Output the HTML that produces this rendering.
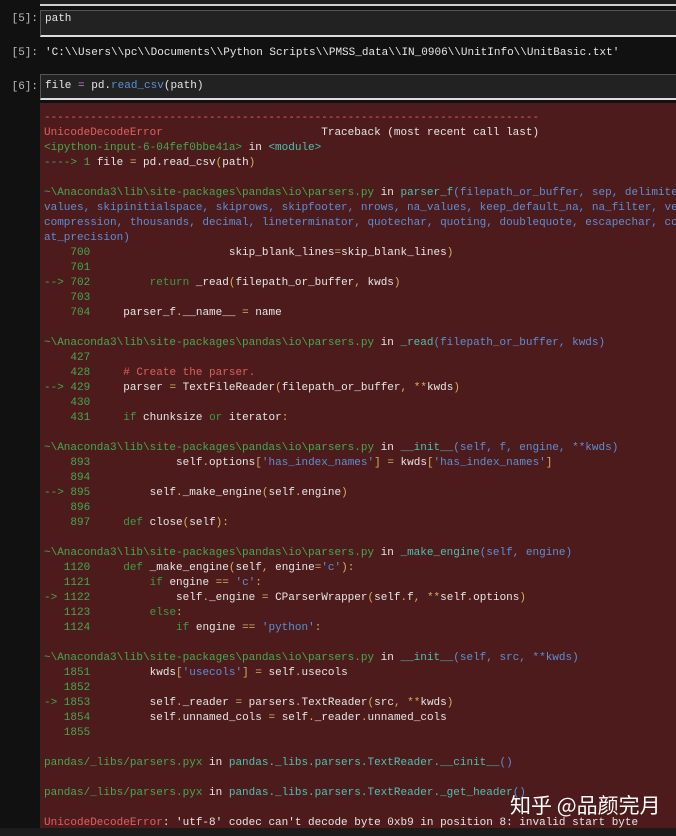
<!DOCTYPE html>
<html><head><meta charset="utf-8"><style>
body{margin:0;width:676px;height:836px;background:#111;overflow:hidden;position:relative;font-family:"Liberation Mono",monospace;font-size:11px;color:#e6e6e6}
.a{position:absolute}
.p{position:absolute;left:0;width:38px;text-align:right;color:#bbb;font-size:11px}
pre{margin:0;font-family:"Liberation Mono",monospace;font-size:11px;line-height:15px;white-space:pre}
.r{color:#e06060}.g{color:#45a852}.b{color:#5b8fd6}.c{color:#4ec0b0}.y{color:#d4b060}.k{color:#3c9c48}.s{color:#5b8fd6}.m{color:#d86060}
</style></head><body>
<div class="a" style="left:40px;top:0;width:636px;height:4px;background:#1e1e1e;border-bottom:2px solid #cfcfcf"></div>
<div class="a" style="left:40px;top:10px;width:636px;height:24px;background:#222;border-top:1px solid #555;border-bottom:2px solid #ddd;border-left:1px solid #555"></div>
<pre class="a" style="left:45px;top:12px">path</pre>
<div class="p" style="top:13px">[5]:</div>
<pre class="a" style="left:45px;top:46px">'C:\\Users\\pc\\Documents\\Python Scripts\\PMSS_data\\IN_0906\\UnitInfo\\UnitBasic.txt'</pre>
<div class="p" style="top:47px">[5]:</div>
<div class="a" style="left:40px;top:74px;width:636px;height:23px;background:#222;border-top:1px solid #555;border-bottom:2px solid #ddd;border-left:1px solid #555"></div>
<pre class="a" style="left:45px;top:79px">file <span style="color:#c678dd">=</span> pd.<span class="b">read_csv</span>(path)</pre>
<div class="p" style="top:81px">[6]:</div>
<div class="a" style="left:40px;top:103px;width:636px;height:725px;background:#4d1b1b;overflow:hidden">
<pre class="a" style="left:4px;top:8px"><span class="r">---------------------------------------------------------------------------</span>
<span class="r">UnicodeDecodeError</span>                        Traceback (most recent call last)
<span class="g">&lt;ipython-input-6-04fef0bbe41a&gt;</span> in <span class="c">&lt;module&gt;</span>
<span class="g">----&gt; 1</span> file <span class="y">=</span> pd.read_csv<span class="y">(</span>path<span class="y">)</span>

<span class="g">~\Anaconda3\lib\site-packages\pandas\io\parsers.py</span> in <span class="c">parser_f</span><span class="b">(filepath_or_buffer, sep, delimiter, header, names, index_col, usecols, squeeze, prefix, mangle_dupe_cols, dtype, engine, converters, true_values, false_</span>
<span class="b">values, skipinitialspace, skiprows, skipfooter, nrows, na_values, keep_default_na, na_filter, verbose,</span>
<span class="b">compression, thousands, decimal, lineterminator, quotechar, quoting, doublequote, escapechar, comment,</span>
<span class="b">at_precision)</span>
<span class="g">    700</span>                     skip_blank_lines<span class="y">=</span>skip_blank_lines<span class="y">)</span>
<span class="g">    701</span>
<span class="g">--&gt; 702</span>         <span class="k">return</span> _read<span class="y">(</span>filepath_or_buffer<span class="y">,</span> kwds<span class="y">)</span>
<span class="g">    703</span>
<span class="g">    704</span>     parser_f<span class="y">.</span>__name__ <span class="y">=</span> name

<span class="g">~\Anaconda3\lib\site-packages\pandas\io\parsers.py</span> in <span class="c">_read</span><span class="b">(filepath_or_buffer, kwds)</span>
<span class="g">    427</span>
<span class="g">    428</span>     <span class="m"># Create the parser.</span>
<span class="g">--&gt; 429</span>     parser <span class="y">=</span> TextFileReader<span class="y">(</span>filepath_or_buffer<span class="y">,</span> <span class="y">**</span>kwds<span class="y">)</span>
<span class="g">    430</span>
<span class="g">    431</span>     <span class="k">if</span> chunksize <span class="k">or</span> iterator<span class="y">:</span>

<span class="g">~\Anaconda3\lib\site-packages\pandas\io\parsers.py</span> in <span class="c">__init__</span><span class="b">(self, f, engine, **kwds)</span>
<span class="g">    893</span>             self<span class="y">.</span>options<span class="y">[</span><span class="s">'has_index_names'</span><span class="y">]</span> <span class="y">=</span> kwds<span class="y">[</span><span class="s">'has_index_names'</span><span class="y">]</span>
<span class="g">    894</span>
<span class="g">--&gt; 895</span>         self<span class="y">.</span>_make_engine<span class="y">(</span>self<span class="y">.</span>engine<span class="y">)</span>
<span class="g">    896</span>
<span class="g">    897</span>     <span class="k">def</span> close<span class="y">(</span>self<span class="y">):</span>

<span class="g">~\Anaconda3\lib\site-packages\pandas\io\parsers.py</span> in <span class="c">_make_engine</span><span class="b">(self, engine)</span>
<span class="g">   1120</span>     <span class="k">def</span> _make_engine<span class="y">(</span>self<span class="y">,</span> engine<span class="y">=</span><span class="s">'c'</span><span class="y">):</span>
<span class="g">   1121</span>         <span class="k">if</span> engine <span class="y">==</span> <span class="s">'c'</span><span class="y">:</span>
<span class="g">-&gt; 1122</span>             self<span class="y">.</span>_engine <span class="y">=</span> CParserWrapper<span class="y">(</span>self<span class="y">.</span>f<span class="y">,</span> <span class="y">**</span>self<span class="y">.</span>options<span class="y">)</span>
<span class="g">   1123</span>         <span class="k">else</span><span class="y">:</span>
<span class="g">   1124</span>             <span class="k">if</span> engine <span class="y">==</span> <span class="s">'python'</span><span class="y">:</span>

<span class="g">~\Anaconda3\lib\site-packages\pandas\io\parsers.py</span> in <span class="c">__init__</span><span class="b">(self, src, **kwds)</span>
<span class="g">   1851</span>         kwds<span class="y">[</span><span class="s">'usecols'</span><span class="y">]</span> <span class="y">=</span> self<span class="y">.</span>usecols
<span class="g">   1852</span>
<span class="g">-&gt; 1853</span>         self<span class="y">.</span>_reader <span class="y">=</span> parsers<span class="y">.</span>TextReader<span class="y">(</span>src<span class="y">,</span> <span class="y">**</span>kwds<span class="y">)</span>
<span class="g">   1854</span>         self<span class="y">.</span>unnamed_cols <span class="y">=</span> self<span class="y">.</span>_reader<span class="y">.</span>unnamed_cols
<span class="g">   1855</span>

<span class="g">pandas/_libs/parsers.pyx</span> in <span class="c">pandas._libs.parsers.TextReader.__cinit__</span><span class="b">()</span>

<span class="g">pandas/_libs/parsers.pyx</span> in <span class="c">pandas._libs.parsers.TextReader._get_header</span><span class="b">()</span>

<span class="r">UnicodeDecodeError</span>: 'utf-8' codec can't decode byte 0xb9 in position 8: invalid start byte</pre>
</div>
<div class="a" style="left:0;top:828px;width:676px;height:8px;background:#1b1b1b"></div>
<div class="a" style="left:510px;top:790px;font-family:'Noto Sans CJK SC',sans-serif;font-size:21px;color:#fff;white-space:nowrap">知乎 @品颜完月</div>
</body></html>
